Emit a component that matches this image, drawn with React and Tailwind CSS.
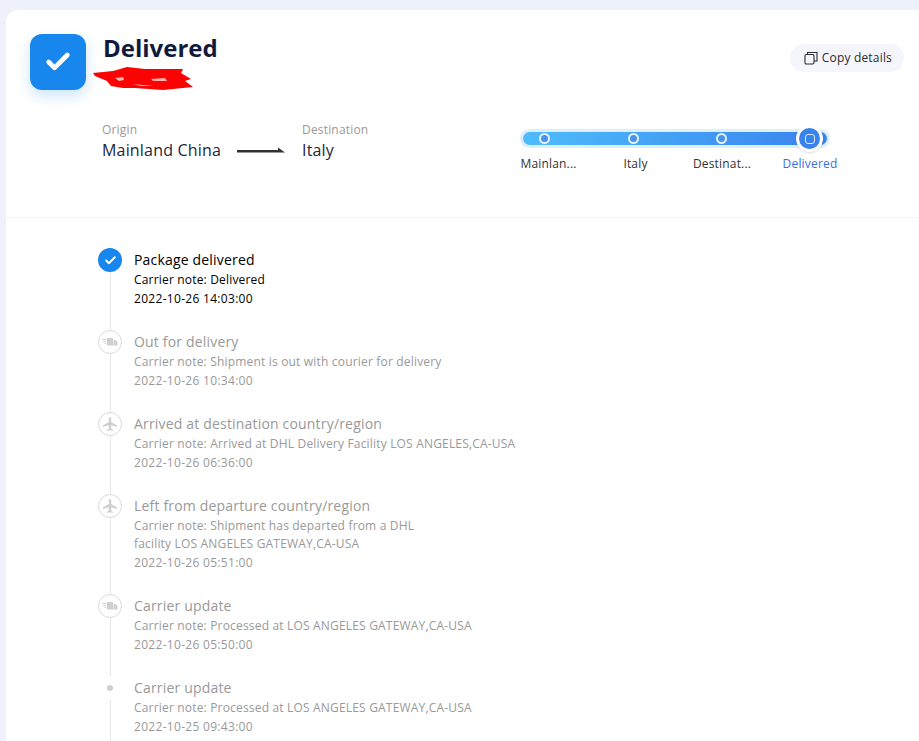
import React from 'react'
import { Check } from 'lucide-react'

const events = [
	{ title: 'Package delivered', note: ['Carrier note: Delivered'], time: '2022-10-26 14:03:00', icon: 'done' },
	{ title: 'Out for delivery', note: ['Carrier note: Shipment is out with courier for delivery'], time: '2022-10-26 10:34:00', icon: 'truck' },
	{ title: 'Arrived at destination country/region', note: ['Carrier note: Arrived at DHL Delivery Facility LOS ANGELES,CA-USA'], time: '2022-10-26 06:36:00', icon: 'plane' },
	{ title: 'Left from departure country/region', note: ['Carrier note: Shipment has departed from a DHL', 'facility LOS ANGELES GATEWAY,CA-USA'], time: '2022-10-26 05:51:00', icon: 'plane' },
	{ title: 'Carrier update', note: ['Carrier note: Processed at LOS ANGELES GATEWAY,CA-USA'], time: '2022-10-26 05:50:00', icon: 'truck' },
	{ title: 'Carrier update', note: ['Carrier note: Processed at LOS ANGELES GATEWAY,CA-USA'], time: '2022-10-25 09:43:00', icon: 'dot' },
]

const stops = [
	{ label: 'Mainlan...', width: 'w-[89px]' },
	{ label: 'Italy', width: 'w-[85px]' },
	{ label: 'Destinat...', width: 'w-[88px]' },
	{ label: 'Delivered', width: 'w-[88px]', active: true },
]

const EventIcon = ({ icon }) => {
	if (icon === 'done') {
		return (
			<div className="w-6 h-6 rounded-full bg-[#1787ee] flex items-center justify-center">
				<Check size={13} color="#fff" strokeWidth={3.5} />
			</div>
		)
	}
	if (icon === 'dot') {
		return (
			<div className="w-6 h-6 bg-white flex items-center justify-center">
				<div className="w-1.5 h-1.5 rounded-full bg-[#cfcfcf]" />
			</div>
		)
	}
	return (
		<div className="w-6 h-6 rounded-full bg-white border-[1.5px] border-[#d9d9d9] flex items-center justify-center">
			{icon === 'truck' ? (
				<svg width="16" height="12" viewBox="0 0 16 12" fill="#cfcfcf">
					<path d="M5 2 H11 V9.5 H5 Z M11.5 4 H13.5 L15.5 6.5 V9.5 H11.5 Z" />
					<path d="M0.5 3 H4.5 V4 H0.5 Z M1.5 5 H4.5 V6 H1.5 Z M2.5 7 H4.5 V8 H2.5 Z" />
				</svg>
			) : (
				<svg width="16" height="16" viewBox="0 0 16 16" fill="#cfcfcf">
					<path d="M8 1 C8.8 1 9.2 2 9.2 3 V6 L15 9.5 V11 L9.2 9.3 V12.5 L10.8 13.8 V15 L8 14.2 L5.2 15 V13.8 L6.8 12.5 V9.3 L1 11 V9.5 L6.8 6 V3 C6.8 2 7.2 1 8 1 Z" />
				</svg>
			)}
		</div>
	)
}

const App = () => {
	return (
		<div className="h-[741px] overflow-hidden bg-[#eef1f9] pt-2.5 pl-1.5 font-['Open_Sans','Noto_Sans',sans-serif] tracking-[0.18px]">
			<div className="h-full bg-white rounded-tl-xl">
				{/* Header */}
				<div className="h-[208px] border-b border-[#f5f5f7] pl-6 pr-[15px] pt-6">
					<div className="flex justify-between">
						<div className="flex gap-[17px]">
							<div className="w-14 h-14 rounded-xl bg-[#1787ee] flex items-center justify-center shadow-[0_6px_14px_rgba(23,135,238,0.22)]">
								<Check size={28} color="#fff" strokeWidth={4} />
							</div>
							<div>
								<h1 className="text-2xl leading-7 font-bold text-[#101a3c] tracking-normal">Delivered</h1>
								{/* red scribble over the tracking number */}
								<svg width="102" height="25" viewBox="0 0 102 25" className="-ml-[10px] mt-1">
									<path d="M0 7 L20 5 L34 1 L52 3 L90 3 L88 7 L98 13 L92 15 L100 21 L70 24 L42 22 L30 22 L18 20 L14 15 L2 10 Z" fill="#fb0303" />
									<path d="M22 12 L30 11 L31 14 L26 15 Z M58 13 L72 12 L74 15 L60 15 Z M40 18 L60 20 L48 20 Z" fill="#ffb0b0" />
								</svg>
							</div>
						</div>
						<button type="button" className="h-7 mt-2.5 pl-3.5 pr-3 rounded-full bg-[#f5f6fc] flex items-center gap-1 text-xs text-[#2b2b33]">
							<svg width="14" height="14" viewBox="0 0 14 14" fill="none" stroke="#2b2b33" strokeWidth="1.1">
								<rect x="1" y="3.5" width="9" height="9.5" rx="1.2" />
								<path d="M3.5 3.5 V1.5 H13 V10 H10" />
							</svg>
							Copy details
						</button>
					</div>
					<div className="flex items-start mt-[31px] pl-[72px]">
						<div className="flex items-end w-[200px]">
							<div className="shrink-0">
								<div className="text-xs leading-4 text-[#999]">Origin</div>
								<div className="text-base leading-[25px] text-[#22263a]">Mainland China</div>
							</div>
							<svg width="48" height="6" viewBox="0 0 48 6" className="ml-4 mb-[10px] shrink-0">
								<path d="M0 3 H41 V0.5 L48 5.5 H0 Z" fill="#333" />
							</svg>
						</div>
						<div className="w-[218px]">
							<div className="text-xs leading-4 text-[#999]">Destination</div>
							<div className="text-base leading-[25px] text-[#22263a]">Italy</div>
						</div>
						<div className="w-[320px] mt-[7px]">
							<div className="relative w-[310px] h-[19px] rounded-full bg-[#dcefff] p-[3px]">
								<div className="h-[13px] rounded-full bg-gradient-to-r from-[#4fbcfb] to-[#3a82ee]" />
								<div className="absolute left-[19px] top-[4px] w-[11px] h-[11px] rounded-full bg-[#4a93e8] border-2 border-[#e4f3ff]" />
								<div className="absolute left-[108px] top-[4px] w-[11px] h-[11px] rounded-full bg-[#4a93e8] border-2 border-[#e4f3ff]" />
								<div className="absolute left-[196px] top-[4px] w-[11px] h-[11px] rounded-full bg-[#4a93e8] border-2 border-[#e4f3ff]" />
								<div className="absolute left-[276px] top-[-4px] w-[27px] h-[27px] rounded-full bg-[#3a82ee] border-[3px] border-white shadow flex items-center justify-center">
									<div className="w-2.5 h-2.5 rounded-[3px] border-[1.5px] border-[#dbeafe]" />
								</div>
							</div>
							<div className="flex mt-2 -ml-4">
								{stops.map((s) => (
									<div key={s.label} className={`${s.width} shrink-0 text-center text-xs leading-4 ${s.active ? 'text-[#3a6fe0]' : 'text-[#333]'}`}>{s.label}</div>
								))}
							</div>
						</div>
					</div>
				</div>

				{/* Timeline */}
				<div className="pl-[92px] pt-[30px]">
					{events.map((e, i) => (
						<div key={i} className="relative flex gap-3 pb-[22px]">
							<div className="absolute left-3 top-0 bottom-[-32px] w-px bg-[#e8e8e8]" />
							<div className="relative z-10 h-6 shrink-0"><EventIcon icon={e.icon} /></div>
							<div className={i === 0 ? 'text-black' : 'text-[#999]'}>
								<div className="text-sm leading-5 mt-[2px] mb-px">{e.title}</div>
								{e.note.map((n) => (
									<div key={n} className="text-xs leading-[18px]">{n}</div>
								))}
								<div className="text-xs leading-[18px] mt-px tracking-[0.3px]">{e.time}</div>
							</div>
						</div>
					))}
				</div>
			</div>
		</div>
	)
}

export default App
